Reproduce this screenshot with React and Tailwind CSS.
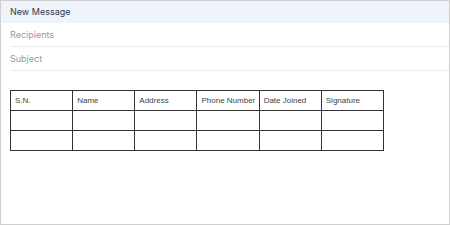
import React from 'react'

const cols = ['S.N.', 'Name', 'Address', 'Phone Number', 'Date Joined', 'Signature']

export default function App() {
  return (
    <div className="w-[450px] h-[225px] bg-white border border-[#cfcfcf] flex flex-col overflow-hidden" style={{ fontFamily: 'Inter, "Noto Sans", sans-serif' }}>
      <div className="h-[22px] bg-[#eef3fc] flex items-center px-[9px] text-[9px] text-[#2f3a4a]">New Message</div>
      <div className="h-[24px] flex items-center ml-[9px] border-b border-[#ececec] text-[9px] text-[#9a9a9a]">Recipients</div>
      <div className="h-[24px] flex items-center ml-[9px] border-b border-[#ececec] text-[9px] text-[#9a9a9a]">Subject</div>
      <div className="pt-[19px] pl-[9px]">
        <table className="border-collapse w-[374px] table-fixed" style={{ fontFamily: '"Liberation Sans", Arial, sans-serif' }}>
          <tbody>
            <tr>
              {cols.map((c) => (
                <td key={c} className="h-[20px] border border-[#333] px-[4px] text-[8px] leading-none whitespace-nowrap text-[#444] align-middle">{c}</td>
              ))}
            </tr>
            {[0, 1].map((r) => (
              <tr key={r}>
                {cols.map((c) => (
                  <td key={c} className="h-[20px] border border-[#333]"></td>
                ))}
              </tr>
            ))}
          </tbody>
        </table>
      </div>
    </div>
  )
}
